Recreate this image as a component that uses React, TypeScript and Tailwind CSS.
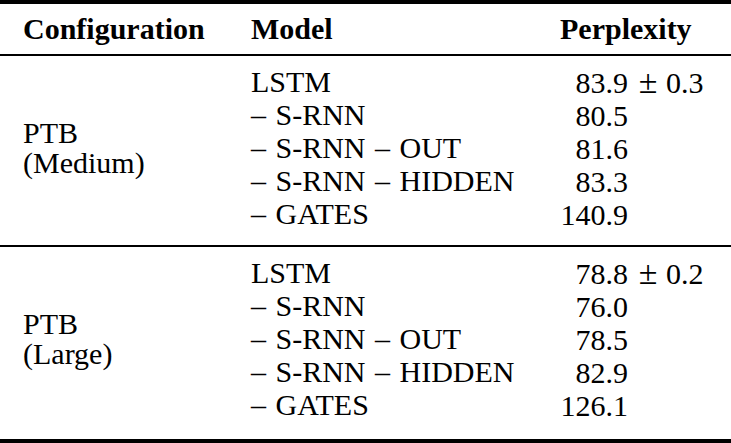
const blocks = [
  {
    config: ['PTB', '(Medium)'],
    rows: [
      { model: 'LSTM', value: '83.9', err: '0.3' },
      { model: '– S-RNN', value: '80.5' },
      { model: '– S-RNN – OUT', value: '81.6' },
      { model: '– S-RNN – HIDDEN', value: '83.3' },
      { model: '– GATES', value: '140.9' },
    ],
  },
  {
    config: ['PTB', '(Large)'],
    rows: [
      { model: 'LSTM', value: '78.8', err: '0.2' },
      { model: '– S-RNN', value: '76.0' },
      { model: '– S-RNN – OUT', value: '78.5' },
      { model: '– S-RNN – HIDDEN', value: '82.9' },
      { model: '– GATES', value: '126.1' },
    ],
  },
];

type Block = (typeof blocks)[number];

const TableBlock = ({ block }: { block: Block }) => {
  return (
    <div className="flex pl-[23px]">
      <div className="w-[228px] flex flex-col justify-center leading-[30px]">
        {block.config.map((line) => (
          <span key={line}>{line}</span>
        ))}
      </div>
      <div className="w-[309px] flex flex-col [word-spacing:2px]">
        {block.rows.map((row) => (
          <span key={row.model} className="whitespace-pre">
            {row.model}
          </span>
        ))}
      </div>
      <div className="flex flex-col">
        {block.rows.map((row) => (
          <div key={row.model} className="flex items-baseline">
            <span className="w-[68px] text-right">{row.value}</span>
            {row.err && (
              <>
                <span className="ml-[9px] w-[22px] text-center text-[34px]">±</span>
                <span className="ml-[7px]">{row.err}</span>
              </>
            )}
          </div>
        ))}
      </div>
    </div>
  );
};

export default function App() {
  return (
    <div className="font-serif">
      <div className="w-[731px] h-[443px] bg-white text-black text-[30px] leading-[33px] font-[family-name:Liberation_Serif,serif] flex flex-col">
        <div className="h-[3.5px] bg-black" />
        <div className="flex pl-[23px] pt-[8px] pb-[9px] font-bold">
          <span className="w-[228px]">Configuration</span>
          <span className="w-[309px]">Model</span>
          <span>Perplexity</span>
        </div>
        <div className="h-[2px] bg-black" />
        <div className="pt-[9.5px] pb-[14px]">
          <TableBlock block={blocks[0]} />
        </div>
        <div className="h-[2px] bg-black" />
        <div className="pt-[9px]">
          <TableBlock block={blocks[1]} />
        </div>
        <div className="mt-auto h-[4.5px] bg-black" />
      </div>
    </div>
  );
}
